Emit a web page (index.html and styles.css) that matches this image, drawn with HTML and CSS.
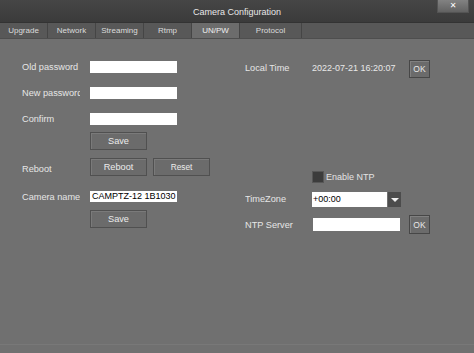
FILE: index.html
```html
<!DOCTYPE html>
<html>
<head>
<meta charset="utf-8">
<title>Camera Configuration</title>
<link rel="stylesheet" href="styles.css">
</head>
<body>
<div class="window">
  <header class="titlebar">
    <h1 class="title">Camera Configuration</h1>
    <button class="close" type="button">&#x2715;</button>
  </header>
  <nav class="tabs">
    <span class="tab">Upgrade</span>
    <span class="tab">Network</span>
    <span class="tab">Streaming</span>
    <span class="tab">Rtmp</span>
    <span class="tab active">UN/PW</span>
    <span class="tab wide">Protocol</span>
  </nav>
  <main class="panel">
    <section class="col col-left">
      <div class="row row-field"><span class="lbl">Old password</span><span class="field"></span></div>
      <div class="row row-field gap14"><span class="lbl">New password</span><span class="field"></span></div>
      <div class="row row-field gap14"><span class="lbl">Confirm</span><span class="field"></span></div>
      <div class="row gap7 indent"><button class="btn" type="button">Save</button></div>
      <div class="row gap8"><span class="lbl lbl-low">Reboot</span><button class="btn" type="button">Reboot</button><button class="btn btn-small gapl6" type="button">Reset</button></div>
      <div class="row row-name gap15"><span class="lbl">Camera name</span><span class="field field-name">CAMPTZ-12 1B1030</span></div>
      <div class="row gap8 indent"><button class="btn" type="button">Save</button></div>
    </section>
    <section class="col col-right">
      <div class="row row-time"><span class="lbl lbl-r">Local Time</span><span class="datetime">2022-07-21 16:20:07</span><button class="ok" type="button">OK</button></div>
      <div class="row row-ntp"><span class="check"></span><span class="check-label">Enable NTP</span></div>
      <div class="row row-tz"><span class="lbl lbl-r">TimeZone</span><span class="select">+00:00</span><span class="arrow"></span></div>
      <div class="row row-server"><span class="lbl lbl-r2">NTP Server</span><span class="field field-server"></span><button class="ok ok-server" type="button">OK</button></div>
    </section>
  </main>
  <footer class="statusbar"></footer>
</div>
</body>
</html>
```
FILE: styles.css
```css
* { box-sizing: border-box; margin: 0; padding: 0; }
body {
  width: 474px;
  height: 353px;
  overflow: hidden;
  background: #707070;
  font-family: "Liberation Sans", Arial, sans-serif;
  color: #e4e4e4;
}
.window { display: flex; flex-direction: column; height: 353px; }

.titlebar {
  height: 22px;
  background: linear-gradient(#464646, #3b3b3b);
  display: grid;
  grid-template-columns: 1fr auto 1fr;
  align-items: start;
}
.title {
  grid-column: 2;
  font-size: 9px;
  font-weight: normal;
  color: #e8e8e8;
  line-height: 24px;
}
.close {
  grid-column: 3;
  justify-self: end;
  margin-right: 5px;
  width: 32px;
  height: 13px;
  background: linear-gradient(#828282, #626262);
  border: 1px solid #545454;
  border-top: 0;
  color: #fff;
  font-family: "DejaVu Sans", sans-serif;
  font-size: 8px;
  font-weight: bold;
  line-height: 12px;
  text-align: center;
}

.tabs {
  height: 17px;
  display: flex;
  background: #585858;
  border-top: 1px solid #333;
  border-bottom: 1px solid #4e4e4e;
}
.tab {
  width: 48px;
  border-right: 1px solid #454545;
  font-size: 8px;
  line-height: 15px;
  text-align: center;
  color: #dcdcdc;
}
.tab.active { background: #6c6c6c; color: #f0f0f0; }
.tab.wide { width: 62px; }

.panel { flex: 1; display: flex; }
.col { display: flex; flex-direction: column; align-items: flex-start; }
.col-left { width: 245px; padding: 22px 0 0 22px; }
.col-right { padding-top: 21px; }

.row { display: flex; align-items: center; }
.row-field { height: 12px; }
.gap7 { margin-top: 7px; }
.gap8 { margin-top: 8px; }
.gap14 { margin-top: 14px; }
.gap15 { margin-top: 15px; }
.gapl6 { margin-left: 6px; }
.indent { margin-left: 68px; }

.lbl {
  width: 58px;
  margin-right: 10px;
  font-size: 9.2px;
  white-space: nowrap;
  overflow: hidden;
  color: #e6e6e6;
}
.lbl-low { padding-top: 4px; }
.lbl-r { width: 67px; margin-right: 0; }
.lbl-r2 { width: 68px; margin-right: 0; }

.field {
  display: block;
  width: 87px;
  height: 12px;
  background: #fff;
}
.row-name { height: 11px; }
.field-name {
  height: 11px;
  color: #000;
  font-size: 9px;
  line-height: 11px;
  padding-left: 2px;
  white-space: nowrap;
}

.btn {
  width: 57px;
  height: 18px;
  background: #6b6b6b;
  border: 1px solid #505050;
  box-shadow: inset 1px 1px 0 #7a7a7a;
  color: #ececec;
  font-family: "Liberation Sans", Arial, sans-serif;
  font-size: 9.2px;
}
.btn-small { font-size: 8.3px; }

.row-time { height: 18px; }
.datetime { width: 97px; font-size: 9px; padding-bottom: 3px; color: #e8e8e8; }
.lbl-r { padding-bottom: 2px; }
.ok {
  width: 21px;
  height: 18px;
  background: #6b6b6b;
  border: 1px solid #474747;
  box-shadow: inset 1px 1px 0 #808080;
  color: #e8e8e8;
  font-family: "Liberation Sans", Arial, sans-serif;
  font-size: 8.5px;
}

.row-ntp { margin-top: 93px; margin-left: 67px; height: 12px; }
.check {
  width: 12px;
  height: 12px;
  background: #3c3c3c;
  border: 1px solid #575757;
}
.check-label { margin-left: 2px; font-size: 9px; }

.row-tz { margin-top: 9px; height: 15px; }
.select {
  width: 75px;
  height: 15px;
  background: #fff;
  color: #000;
  font-size: 9px;
  line-height: 15px;
  padding-left: 1px;
}
.arrow {
  width: 13px;
  height: 15px;
  margin-left: 1px;
  background: #4c4c4c;
  display: flex;
  align-items: center;
  justify-content: center;
}
.arrow::after {
  content: "";
  border-left: 4px solid transparent;
  border-right: 4px solid transparent;
  border-top: 4px solid #f0f0f0;
}

.row-server { margin-top: 8px; height: 19px; }
.field-server { width: 87px; height: 13px; }
.ok-server { height: 19px; margin-left: 9px; }

.statusbar {
  height: 9px;
  border-top: 1px solid #787878;
}
```
